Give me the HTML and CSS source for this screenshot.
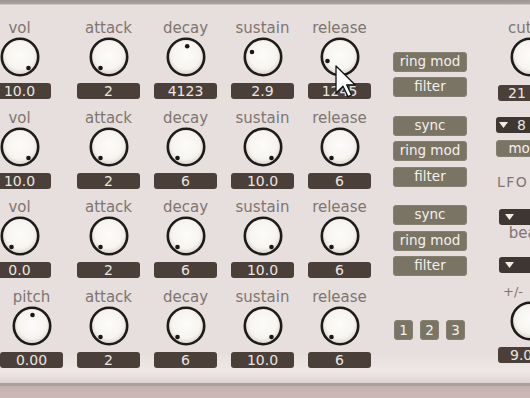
FILE: index.html
```html
<!DOCTYPE html>
<html>
<head>
<meta charset="utf-8">
<link rel="stylesheet" href="styles.css">
</head>
<body>
<svg class="defs" width="0" height="0" aria-hidden="true">
  <defs>
    <radialGradient id="kg" cx="50%" cy="45%" r="55%">
      <stop offset="0%" stop-color="#fdfcfa"/>
      <stop offset="70%" stop-color="#f7f4f0"/>
      <stop offset="100%" stop-color="#d6d1cc"/>
    </radialGradient>
  </defs>
</svg>
<div class="page">
  <div class="topbar"></div>
  <div class="panel">
    <div class="main">
      <div class="strips">
        <div class="row">
          <div class="strip shift"><div class="lbl">vol</div><svg class="knob" viewBox="0 0 40 40"><circle class="kb" cx="20" cy="20" r="18.2"/><circle class="kd" cx="28.5" cy="31" r="2.3"/></svg><div class="val">10.0</div></div>
          <div class="strip"><div class="lbl">attack</div><svg class="knob" viewBox="0 0 40 40"><circle class="kb" cx="20" cy="20" r="18.2"/><circle class="kd" cx="11.5" cy="31" r="2.3"/></svg><div class="val">2</div></div>
          <div class="strip"><div class="lbl">decay</div><svg class="knob" viewBox="0 0 40 40"><circle class="kb" cx="20" cy="20" r="18.2"/><circle class="kd" cx="21.2" cy="9.3" r="2.3"/></svg><div class="val">4123</div></div>
          <div class="strip"><div class="lbl">sustain</div><svg class="knob" viewBox="0 0 40 40"><circle class="kb" cx="20" cy="20" r="18.2"/><circle class="kd" cx="9" cy="15" r="2.3"/></svg><div class="val">2.9</div></div>
          <div class="strip"><div class="lbl">release</div><svg class="knob" viewBox="0 0 40 40"><circle class="kb" cx="20" cy="20" r="18.2"/><circle class="kd" cx="7.5" cy="24" r="2.3"/></svg><div class="val">1245</div></div>
        </div>
        <div class="row">
          <div class="strip shift"><div class="lbl">vol</div><svg class="knob" viewBox="0 0 40 40"><circle class="kb" cx="20" cy="20" r="18.2"/><circle class="kd" cx="28.5" cy="31" r="2.3"/></svg><div class="val">10.0</div></div>
          <div class="strip"><div class="lbl">attack</div><svg class="knob" viewBox="0 0 40 40"><circle class="kb" cx="20" cy="20" r="18.2"/><circle class="kd" cx="11.5" cy="31" r="2.3"/></svg><div class="val">2</div></div>
          <div class="strip"><div class="lbl">decay</div><svg class="knob" viewBox="0 0 40 40"><circle class="kb" cx="20" cy="20" r="18.2"/><circle class="kd" cx="11.5" cy="31" r="2.3"/></svg><div class="val">6</div></div>
          <div class="strip"><div class="lbl">sustain</div><svg class="knob" viewBox="0 0 40 40"><circle class="kb" cx="20" cy="20" r="18.2"/><circle class="kd" cx="28.5" cy="31" r="2.3"/></svg><div class="val">10.0</div></div>
          <div class="strip"><div class="lbl">release</div><svg class="knob" viewBox="0 0 40 40"><circle class="kb" cx="20" cy="20" r="18.2"/><circle class="kd" cx="11.5" cy="31" r="2.3"/></svg><div class="val">6</div></div>
        </div>
        <div class="row">
          <div class="strip shift"><div class="lbl">vol</div><svg class="knob" viewBox="0 0 40 40"><circle class="kb" cx="20" cy="20" r="18.2"/><circle class="kd" cx="11.5" cy="31" r="2.3"/></svg><div class="val">0.0</div></div>
          <div class="strip"><div class="lbl">attack</div><svg class="knob" viewBox="0 0 40 40"><circle class="kb" cx="20" cy="20" r="18.2"/><circle class="kd" cx="11.5" cy="31" r="2.3"/></svg><div class="val">2</div></div>
          <div class="strip"><div class="lbl">decay</div><svg class="knob" viewBox="0 0 40 40"><circle class="kb" cx="20" cy="20" r="18.2"/><circle class="kd" cx="11.5" cy="31" r="2.3"/></svg><div class="val">6</div></div>
          <div class="strip"><div class="lbl">sustain</div><svg class="knob" viewBox="0 0 40 40"><circle class="kb" cx="20" cy="20" r="18.2"/><circle class="kd" cx="28.5" cy="31" r="2.3"/></svg><div class="val">10.0</div></div>
          <div class="strip"><div class="lbl">release</div><svg class="knob" viewBox="0 0 40 40"><circle class="kb" cx="20" cy="20" r="18.2"/><circle class="kd" cx="11.5" cy="31" r="2.3"/></svg><div class="val">6</div></div>
        </div>
        <div class="row">
          <div class="strip"><div class="lbl">pitch</div><svg class="knob" viewBox="0 0 40 40"><circle class="kb" cx="20" cy="20" r="18.2"/><circle class="kd" cx="20.5" cy="9" r="2.3"/></svg><div class="val">0.00</div></div>
          <div class="strip"><div class="lbl">attack</div><svg class="knob" viewBox="0 0 40 40"><circle class="kb" cx="20" cy="20" r="18.2"/><circle class="kd" cx="11.5" cy="31" r="2.3"/></svg><div class="val">2</div></div>
          <div class="strip"><div class="lbl">decay</div><svg class="knob" viewBox="0 0 40 40"><circle class="kb" cx="20" cy="20" r="18.2"/><circle class="kd" cx="11.5" cy="31" r="2.3"/></svg><div class="val">6</div></div>
          <div class="strip"><div class="lbl">sustain</div><svg class="knob" viewBox="0 0 40 40"><circle class="kb" cx="20" cy="20" r="18.2"/><circle class="kd" cx="28.5" cy="31" r="2.3"/></svg><div class="val">10.0</div></div>
          <div class="strip"><div class="lbl">release</div><svg class="knob" viewBox="0 0 40 40"><circle class="kb" cx="20" cy="20" r="18.2"/><circle class="kd" cx="11.5" cy="31" r="2.3"/></svg><div class="val">6</div></div>
        </div>
      </div>

      <div class="bcol">
        <div class="bgroup">
          <div class="slot"></div>
          <div class="btn">ring mod</div>
          <div class="btn">filter</div>
        </div>
        <div class="bgroup">
          <div class="btn">sync</div>
          <div class="btn">ring mod</div>
          <div class="btn">filter</div>
        </div>
        <div class="bgroup">
          <div class="btn">sync</div>
          <div class="btn">ring mod</div>
          <div class="btn">filter</div>
        </div>
        <div class="bgroup">
          <div class="slot"></div>
          <div class="nums">
            <div class="num">1</div>
            <div class="num">2</div>
            <div class="num">3</div>
          </div>
        </div>
      </div>

      <div class="side">
        <div class="lbl">cutoff</div>
        <svg class="knob" viewBox="0 0 40 40"><circle class="kb" cx="20" cy="20" r="18.2"/><circle class="kd" cx="32" cy="27" r="2.3"/></svg>
        <div class="val side-val">21</div>
        <div class="drop drop-a"><svg class="tri" viewBox="0 0 9 6"><polygon points="0,0 9,0 4.5,6"/></svg><span>8</span></div>
        <div class="btn side-btn">mono</div>
        <div class="lfo">LFO</div>
        <div class="drop drop-b"><svg class="tri" viewBox="0 0 9 6"><polygon points="0,0 9,0 4.5,6"/></svg><span></span></div>
        <div class="lbl beat">beats</div>
        <div class="drop drop-c"><svg class="tri" viewBox="0 0 9 6"><polygon points="0,0 9,0 4.5,6"/></svg><span></span></div>
        <div class="pm">+/-</div>
        <svg class="knob knob-b" viewBox="0 0 40 40"><circle class="kb" cx="20" cy="20" r="18.2"/><circle class="kd" cx="33" cy="20" r="2.3"/></svg>
        <div class="val side-val2">9.0</div>
      </div>
    </div>
    <svg class="cursor" viewBox="0 0 22 33" width="22" height="33">
      <polygon points="1,1 1,28 8,21.2 13,31.6 16.6,30 11.6,19.8 20,19.8" />
    </svg>
  </div>
  <div class="bline"></div>
  <div class="bstrip"></div>
</div>
</body>
</html>
```

FILE: styles.css
```css
html, body {
  margin: 0;
  padding: 0;
  background: #e5dedc;
}

.defs {
  position: absolute;
  width: 0;
  height: 0;
}

.page {
  width: 530px;
  height: 398px;
  display: flex;
  flex-direction: column;
  overflow: hidden;
  font-family: "DejaVu Sans", "Liberation Sans", sans-serif;
}

.topbar {
  height: 4px;
  flex: none;
  background: linear-gradient(#9e9492, #aba19f);
  border-bottom: 1px solid #cdc4c2;
}

.panel {
  flex: 1;
  position: relative;
  background: linear-gradient(#e6dfdd 0%, #e6dfdd 92%, #ede8e6 97%, #dcd4d2 100%);
  overflow: hidden;
}

.bline {
  height: 3px;
  flex: none;
  background: #a99f9d;
}

.bstrip {
  height: 12px;
  flex: none;
  background: linear-gradient(#c3b2ad, #cbbab5);
}

.main {
  display: flex;
  padding-top: 14px;
}

.strips {
  display: flex;
  flex-direction: column;
  width: 371px;
  flex: none;
}

.row {
  height: 89.667px;
  display: flex;
  gap: 14px;
}

.strip {
  width: 63px;
  flex: none;
  display: flex;
  flex-direction: column;
  align-items: center;
}

.strip.shift {
  margin-left: -12px;
  margin-right: 12px;
}

.lbl {
  height: 18px;
  line-height: 18px;
  font-size: 15px;
  color: #7f7571;
  white-space: nowrap;
  text-align: center;
}

.knob {
  width: 40px;
  height: 40px;
  display: block;
  flex: none;
}

.kb {
  fill: url(#kg);
  stroke: #1d1b19;
  stroke-width: 2.6;
}

.kd {
  fill: #1a1816;
}

.val {
  margin-top: 6px;
  width: 63px;
  height: 16px;
  line-height: 16px;
  border-radius: 3px;
  background: #4a3f39;
  color: #ece6e1;
  font-size: 14px;
  text-align: center;
  white-space: nowrap;
  flex: none;
  box-sizing: border-box;
}

.bcol {
  width: 74px;
  flex: none;
  margin-left: 22px;
  display: flex;
  flex-direction: column;
}

.bgroup {
  height: 89.667px;
  box-sizing: border-box;
  padding-top: 7px;
  display: flex;
  flex-direction: column;
  gap: 5.5px;
}

.slot {
  height: 20px;
}

.btn {
  height: 20px;
  box-sizing: border-box;
  border-radius: 4px;
  background: #7a7465;
  box-shadow: inset 0 0 0 1px #858070;
  color: #f4f0ea;
  font-size: 13.5px;
  line-height: 19px;
  text-align: center;
  white-space: nowrap;
}

.nums {
  display: flex;
  gap: 7px;
  margin-left: 1px;
}

.num {
  width: 19px;
  height: 20px;
  border-radius: 4px;
  background: #7a7465;
  box-shadow: inset 0 0 0 1px #858070;
  color: #f4f0ea;
  font-size: 13.5px;
  line-height: 20px;
  text-align: center;
}

.side {
  width: 63px;
  flex: none;
  margin-left: 31px;
  display: flex;
  flex-direction: column;
  align-items: center;
}

.side .val.side-val {
  margin-top: 8px;
  text-align: left;
  padding-left: 10px;
}

.drop {
  width: 63px;
  height: 16px;
  border-radius: 3px;
  background: #3e3631;
  color: #ece6e1;
  font-size: 14px;
  line-height: 16px;
  display: flex;
  align-items: center;
  gap: 9px;
  box-sizing: border-box;
  white-space: nowrap;
  flex: none;
}

.drop-a {
  margin-top: 16px;
  margin-left: -4px;
  padding-left: 3px;
}

.drop-b {
  margin-top: 19px;
  margin-left: 2px;
  padding-left: 6px;
}

.drop-c {
  margin-top: 16px;
  margin-left: 2px;
  padding-left: 6px;
}

.tri {
  width: 9px;
  height: 6px;
  fill: #f1ece7;
  flex: none;
}

.side-btn {
  margin-top: 7px;
  width: 63px;
  height: 17px;
  line-height: 17px;
  margin-left: -4px;
}

.lfo {
  align-self: flex-start;
  margin-top: 17px;
  margin-left: -1px;
  height: 16px;
  line-height: 16px;
  font-size: 14px;
  letter-spacing: 1.5px;
  color: #7f7571;
}

.lbl.beat {
  height: 16px;
  line-height: 16px;
}

.pm {
  align-self: flex-start;
  margin-top: 11px;
  margin-left: 5px;
  height: 16px;
  line-height: 16px;
  font-size: 13px;
  color: #7f7571;
}

.knob-b {
  margin-top: 1px;
}

.side .val.side-val2 {
  margin-top: 6px;
  text-align: left;
  padding-left: 12px;
}

.cursor {
  position: absolute;
  left: 335px;
  top: 60px;
  overflow: visible;
}

.cursor polygon {
  fill: #ffffff;
  stroke: #111111;
  stroke-width: 1.3;
  stroke-linejoin: round;
}
```
